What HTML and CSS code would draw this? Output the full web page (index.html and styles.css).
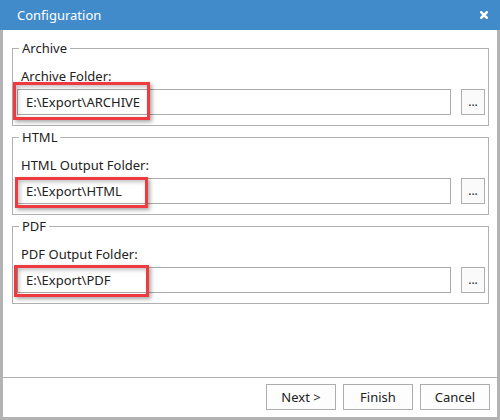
FILE: index.html
```html
<!DOCTYPE html>
<html>
<head>
<meta charset="utf-8">
<link rel="stylesheet" href="styles.css">
</head>
<body>
<div class="dialog">
  <div class="titlebar">
    <span class="title">Configuration</span>
    <svg class="close" viewBox="0 0 8 8" width="8" height="8"><path d="M1.3 1.3 L6.7 6.7 M6.7 1.3 L1.3 6.7" stroke="#fff" stroke-width="2.6" stroke-linecap="square" fill="none"/></svg>
  </div>
  <div class="body">
    <div class="content">
      <div class="group">
        <span class="legend">Archive</span>
        <span class="label">Archive Folder:</span>
        <div class="row">
          <div class="field"><input class="input" type="text" value="E:\Export\ARCHIVE"><span class="mark mark-1"></span></div>
          <button class="browse">...</button>
        </div>
      </div>
      <div class="group">
        <span class="legend">HTML</span>
        <span class="label">HTML Output Folder:</span>
        <div class="row">
          <div class="field"><input class="input" type="text" value="E:\Export\HTML"><span class="mark mark-2"></span></div>
          <button class="browse">...</button>
        </div>
      </div>
      <div class="group">
        <span class="legend">PDF</span>
        <span class="label">PDF Output Folder:</span>
        <div class="row">
          <div class="field"><input class="input" type="text" value="E:\Export\PDF"><span class="mark mark-3"></span></div>
          <button class="browse">...</button>
        </div>
      </div>
    </div>
    <div class="footer">
      <button class="btn">Next &gt;</button>
      <button class="btn">Finish</button>
      <button class="btn">Cancel</button>
    </div>
  </div>
</div>
</body>
</html>
```
FILE: styles.css
```css
* { box-sizing: border-box; }
html, body { margin: 0; padding: 0; }
body {
  width: 500px;
  height: 420px;
  background: #fff;
  color: #222;
  font-family: "Noto Sans", "DejaVu Sans", sans-serif;
  font-size: 13px;
  overflow: hidden;
}
.dialog {
  width: 500px;
  height: 420px;
  display: flex;
  flex-direction: column;
}
.titlebar {
  height: 30px;
  flex: none;
  background: #428bca;
  color: #fff;
  display: flex;
  align-items: center;
  justify-content: space-between;
  padding: 0 12px 0 17px;
}
.title { font-size: 13px; line-height: 16px; }
.close { display: block; width: 8px; height: 8px; }
.body {
  flex: 1;
  display: flex;
  flex-direction: column;
  border: 3px solid #b3b3b3;
  border-top: 0;
}
.content {
  flex: 1;
  display: flex;
  flex-direction: column;
  gap: 11px;
  padding: 18px 8px 0 9px;
}
.group {
  position: relative;
  height: 78px;
  flex: none;
  border: 1px solid #b0b0b0;
  padding: 19px 3px 0 4px;
  display: flex;
  flex-direction: column;
  gap: 5px;
}
.legend {
  position: absolute;
  top: -9px;
  left: 6px;
  padding: 0 3px;
  background: #fff;
  line-height: 16px;
}
.label {
  display: block;
  line-height: 16px;
  padding-left: 4px;
}
.row {
  display: flex;
  gap: 10px;
}
.field {
  position: relative;
  flex: 1;
  display: flex;
}
.input {
  flex: 1;
  width: 100%;
  height: 26px;
  margin: 0;
  border: 1px solid #ababab;
  background: #fff;
  padding: 0 8px;
  font-family: "Noto Sans", "DejaVu Sans", sans-serif;
  font-size: 13px;
  color: #222;
  outline: none;
}
.browse {
  width: 24px;
  height: 26px;
  flex: none;
  margin: 0;
  padding: 0;
  border: 1px solid #adadad;
  background: #fafafa;
  font-family: "Noto Sans", "DejaVu Sans", sans-serif;
  font-size: 12px;
  color: #222;
  line-height: 22px;
}
.mark {
  position: absolute;
  border: 3px solid #ee3b42;
  box-shadow: 2px 2px 4px rgba(0, 0, 0, 0.35), inset 2px 2px 4px rgba(0, 0, 0, 0.25);
  pointer-events: none;
}
.mark-1 { left: -4px; top: -7px; width: 137px; height: 38px; }
.mark-2 { left: -2px; top: -1px; width: 133px; height: 31px; }
.mark-3 { left: -3px; top: -2px; width: 135px; height: 32px; }
.footer {
  height: 40px;
  flex: none;
  border-top: 1px solid #b0b0b0;
  display: flex;
  justify-content: flex-end;
  align-items: flex-start;
  gap: 7px;
  padding: 6px 7px 0 0;
}
.btn {
  width: 70px;
  height: 26px;
  margin: 0;
  padding: 0;
  border: 1px solid #adadad;
  background: #fdfdfd;
  font-family: "Noto Sans", "DejaVu Sans", sans-serif;
  font-size: 13px;
  color: #222;
}
```
